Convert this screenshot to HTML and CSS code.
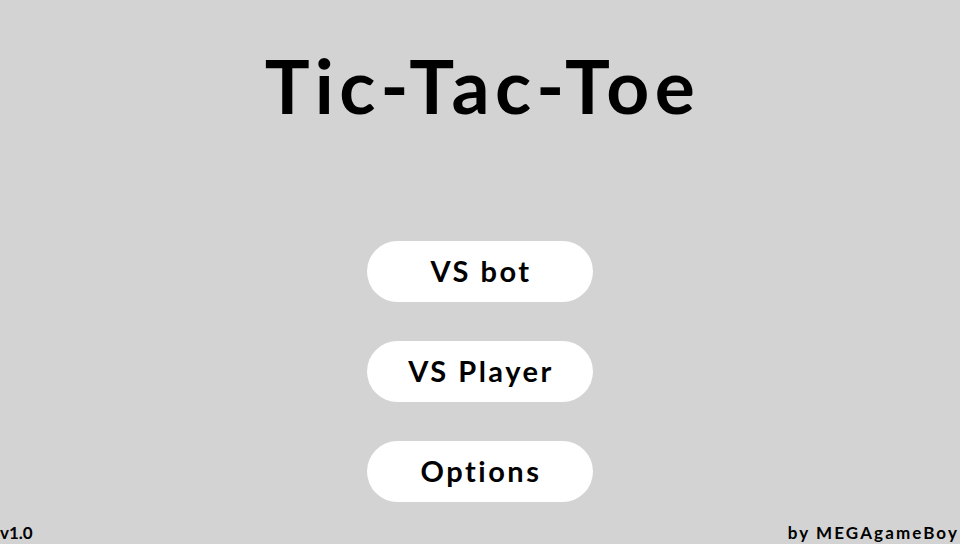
FILE: index.html
```html
<!DOCTYPE html>
<html>
<head>
<meta charset="utf-8">
<link rel="stylesheet" href="styles.css">
</head>
<body>
<div class="screen">
  <h1 class="title">Tic-Tac-Toe</h1>
  <div class="menu">
    <button class="btn">VS bot</button>
    <button class="btn">VS Player</button>
    <button class="btn">Options</button>
  </div>
  <div class="footer">
    <span class="version">v1.0</span>
    <span class="author">by MEGAgameBoy</span>
  </div>
</div>
</body>
</html>
```
FILE: styles.css
```css
html, body {
  margin: 0;
  padding: 0;
}
body {
  background: #d3d3d3;
  font-family: "Lato", "Noto Sans", sans-serif;
  color: #000;
}
.screen {
  width: 960px;
  height: 544px;
  display: flex;
  flex-direction: column;
  align-items: center;
}
.title {
  margin: 40px 0 0;
  font-size: 75px;
  font-weight: 700;
  letter-spacing: 5.4px;
  line-height: 90px;
  padding-left: 5px;
}
.menu {
  margin-top: 111px;
  display: flex;
  flex-direction: column;
  gap: 39px;
}
.btn {
  width: 226px;
  height: 61px;
  border: none;
  border-radius: 31px;
  background: #fff;
  font-family: inherit;
  font-size: 29px;
  font-weight: 700;
  letter-spacing: 2.5px;
  color: #000;
  padding: 0 0 2px 2px;
}
.footer {
  margin-top: auto;
  width: 100%;
  display: flex;
  justify-content: space-between;
  align-items: baseline;
  font-size: 17px;
  font-weight: 700;
  line-height: 20px;
  padding-bottom: 1px;
}
.version {
  letter-spacing: 0;
}
.author {
  letter-spacing: 2.1px;
  padding-right: 1px;
}
```
